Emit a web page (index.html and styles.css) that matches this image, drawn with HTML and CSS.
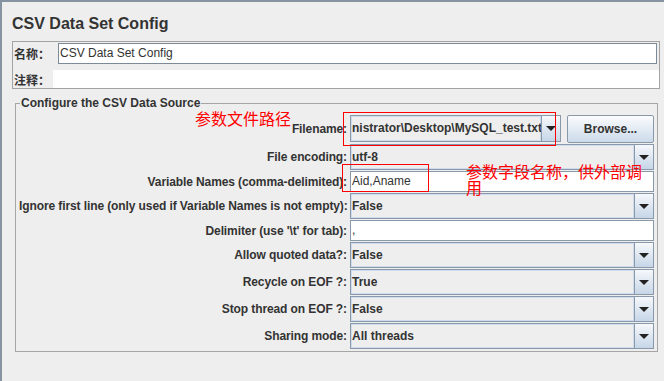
FILE: index.html
```html
<!DOCTYPE html>
<html lang="zh">
<head>
    <meta charset="UTF-8">
    <title>CSV Data Set Config</title>
    <link rel="stylesheet" href="styles.css">
</head>
<body>
    <div class="page">
        <h1 class="title">CSV Data Set Config</h1>

        <div class="name-panel">
            <div class="name-row">
                <div class="name-label">名称：</div>
                <div class="text-input">CSV Data Set Config</div>
            </div>
            <div class="comment-row">
                <div class="comment-label">注释：</div>
                <div class="comment-area"></div>
            </div>
        </div>

        <fieldset class="source">
            <legend>Configure the CSV Data Source</legend>
            <div class="form-grid">
                <div class="label">Filename:</div>
                <div class="file-row">
                    <div class="combo file-combo">
                        <span class="combo-value">nistrator\Desktop\MySQL_test.txt</span>
                        <span class="combo-arrow"></span>
                    </div>
                    <div class="btn">Browse...</div>
                </div>

                <div class="label">File encoding:</div>
                <div class="combo">
                    <span class="combo-value">utf-8</span>
                    <span class="combo-arrow"></span>
                </div>

                <div class="label">Variable Names (comma-delimited):</div>
                <div class="field">Aid,Aname</div>

                <div class="label">Ignore first line (only used if Variable Names is not empty):</div>
                <div class="combo">
                    <span class="combo-value">False</span>
                    <span class="combo-arrow"></span>
                </div>

                <div class="label">Delimiter (use '\t' for tab):</div>
                <div class="field">,</div>

                <div class="label">Allow quoted data?:</div>
                <div class="combo">
                    <span class="combo-value">False</span>
                    <span class="combo-arrow"></span>
                </div>

                <div class="label">Recycle on EOF ?:</div>
                <div class="combo">
                    <span class="combo-value">True</span>
                    <span class="combo-arrow"></span>
                </div>

                <div class="label">Stop thread on EOF ?:</div>
                <div class="combo">
                    <span class="combo-value">False</span>
                    <span class="combo-arrow"></span>
                </div>

                <div class="label">Sharing mode:</div>
                <div class="combo">
                    <span class="combo-value">All threads</span>
                    <span class="combo-arrow"></span>
                </div>
            </div>
        </fieldset>

        <!-- hand-drawn annotations over the form -->
        <div class="mark mark-file"></div>
        <div class="mark mark-vars"></div>
        <div class="note note-file">参数文件路径</div>
        <div class="note note-vars">参数字段名称，供外部调用</div>
    </div>
</body>
</html>
```

FILE: styles.css
```css
html {
    background: #eeeeee;
}

body {
    margin: 0;
    min-height: 100vh;
    box-sizing: border-box;
    border-top: 2px solid #8593a3;
    border-left: 2px solid #8593a3;
    background: #eeeeee;
    color: #333333;
    font-family: "Liberation Sans", Arial, "Noto Sans CJK SC", sans-serif;
    font-size: 12px;
}

.page {
    position: relative;
    padding: 13px 4px 0 10px;
}

.title {
    margin: 0;
    font-size: 16px;
    line-height: 18px;
    font-weight: bold;
}

/* Name / comment block */
.name-panel {
    margin-top: 8px;
    border: 1px solid #a3a3a3;
    padding: 1px 0 0 1px;
}

.name-row {
    display: flex;
    align-items: center;
    margin-right: 2px;
}

.name-label {
    width: 44px;
    font-weight: bold;
}

.text-input {
    flex: 1;
    height: 21px;
    box-sizing: border-box;
    border: 1px solid #7d8a98;
    background: #ffffff;
    padding-left: 1px;
    line-height: 19px;
}

.comment-row {
    display: flex;
    align-items: center;
    height: 18px;
    margin-top: 6px;
}

.comment-label {
    width: 39px;
    font-weight: bold;
}

.comment-area {
    flex: 1;
    align-self: stretch;
    background: #ffffff;
}

/* CSV source group */
.source {
    margin: 7px 2px 0 3px;
    padding: 5px 3px 2px 3px;
    border: 1px solid #a5a5a5;
    min-width: 0;
}

.source legend {
    margin-left: 1px;
    padding: 0 1px;
    font-weight: bold;
    line-height: 14px;
}

.form-grid {
    display: grid;
    grid-template-columns: 328px 1fr;
    column-gap: 3px;
    row-gap: 1px;
}

.label {
    align-self: center;
    text-align: right;
    white-space: nowrap;
    font-weight: bold;
    letter-spacing: -0.1px;
}

.combo {
    display: flex;
    height: 26px;
    box-sizing: border-box;
    border: 1px solid #8a99aa;
    background: #eeeeee;
}

.combo-value {
    flex: 1;
    min-width: 0;
    overflow: hidden;
    white-space: nowrap;
    padding-left: 1px;
    line-height: 24px;
    font-weight: bold;
    box-shadow: inset 1px 1px 0 #cfdced, inset -1px -1px 0 #cfdced;
}

.combo-arrow {
    flex: none;
    width: 19px;
    box-sizing: border-box;
    border-left: 1px solid #8a99aa;
    background: linear-gradient(#f6f8fb, #c6d6e8);
    display: flex;
    align-items: center;
    justify-content: center;
}

.combo-arrow::after {
    content: "";
    border-left: 5px solid transparent;
    border-right: 5px solid transparent;
    border-top: 5px solid #222222;
}

.file-row {
    display: flex;
    align-items: flex-start;
    gap: 6px;
}

.file-combo {
    width: 211px;
    height: 27px;
}

.btn {
    width: 87px;
    height: 28px;
    box-sizing: border-box;
    border: 1px solid #8a99aa;
    border-radius: 2px;
    background: linear-gradient(#fbfcfe, #cbdaea);
    font-weight: bold;
    text-align: center;
    line-height: 26px;
}

.field {
    height: 21px;
    box-sizing: border-box;
    border: 1px solid #8a99aa;
    background: #ffffff;
    padding-left: 1px;
    line-height: 19px;
}

/* Red annotations */
.mark {
    position: absolute;
    box-sizing: border-box;
    border: 1px solid #ff0000;
}

.mark-file {
    left: 341px;
    top: 110px;
    width: 213px;
    height: 34px;
}

.mark-vars {
    left: 340px;
    top: 162px;
    width: 87px;
    height: 28px;
}

.note {
    position: absolute;
    color: #ff0000;
    font-family: "Noto Sans CJK SC", sans-serif;
    font-size: 16px;
    line-height: 16px;
}

.note-file {
    left: 193px;
    top: 108px;
}

.note-vars {
    left: 464px;
    top: 161px;
    width: 177px;
}
```
